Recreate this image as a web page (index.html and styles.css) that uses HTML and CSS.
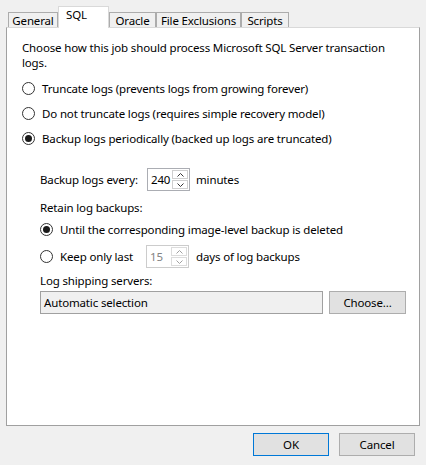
FILE: index.html
```html
<!DOCTYPE html>
<html>
<head>
<meta charset="utf-8">
<link rel="stylesheet" href="styles.css">
</head>
<body>
<div class="dialog">
  <div class="tabs">
    <div class="tab tab-general">General</div>
    <div class="tab tab-active tab-sql">SQL</div>
    <div class="tab tab-oracle">Oracle</div>
    <div class="tab tab-files">File Exclusions</div>
    <div class="tab tab-scripts">Scripts</div>
  </div>
  <div class="panel">
    <p class="desc">Choose how this job should process Microsoft SQL Server transaction<br>logs.</p>
    <div class="options">
      <div class="radio-row"><span class="radio"></span><span>Truncate logs (prevents logs from growing forever)</span></div>
      <div class="radio-row"><span class="radio"></span><span>Do not truncate logs (requires simple recovery model)</span></div>
      <div class="radio-row"><span class="radio checked"></span><span>Backup logs periodically (backed up logs are truncated)</span></div>
    </div>
    <div class="sub">
      <div class="spin-row">
        <span class="every-label">Backup logs every:</span>
        <div class="spin">
          <span class="spin-val">240</span>
          <div class="spin-btns">
            <span class="spin-btn"><svg width="7" height="4" viewBox="0 0 7 4"><path d="M0.5 3.5 L3.5 0.5 L6.5 3.5" fill="none" stroke="#333" stroke-width="1"/></svg></span>
            <span class="spin-btn"><svg width="7" height="4" viewBox="0 0 7 4"><path d="M0.5 0.5 L3.5 3.5 L6.5 0.5" fill="none" stroke="#333" stroke-width="1"/></svg></span>
          </div>
        </div>
        <span class="unit">minutes</span>
      </div>
      <div class="line retain">Retain log backups:</div>
      <div class="radio-row until"><span class="radio checked"></span><span>Until the corresponding image-level backup is deleted</span></div>
      <div class="radio-row keep">
        <span class="radio"></span>
        <span class="keep-label">Keep only last</span>
        <div class="spin spin-disabled">
          <span class="spin-val">15</span>
          <div class="spin-btns">
            <span class="spin-btn"><svg width="7" height="4" viewBox="0 0 7 4"><path d="M0.5 3.5 L3.5 0.5 L6.5 3.5" fill="none" stroke="#a0a0a0" stroke-width="1"/></svg></span>
            <span class="spin-btn"><svg width="7" height="4" viewBox="0 0 7 4"><path d="M0.5 0.5 L3.5 3.5 L6.5 0.5" fill="none" stroke="#a0a0a0" stroke-width="1"/></svg></span>
          </div>
        </div>
        <span class="unit">days of log backups</span>
      </div>
      <div class="line shipping">Log shipping servers:</div>
      <div class="field-row">
        <div class="field">Automatic selection</div>
        <button class="btn btn-choose">Choose...</button>
      </div>
    </div>
  </div>
  <div class="footer">
    <button class="btn btn-default">OK</button>
    <button class="btn">Cancel</button>
  </div>
</div>
</body>
</html>
```
FILE: styles.css
```css
* { box-sizing: border-box; }
html, body { margin: 0; padding: 0; }
body {
  background: #f0f0f0;
  font-family: "Noto Sans", "Liberation Sans", sans-serif;
  font-size: 11.5px;
  letter-spacing: -0.15px;
  color: #000;
  width: 426px;
  height: 465px;
  overflow: hidden;
}
.dialog { display: flex; flex-direction: column; }

.tabs {
  display: flex;
  align-items: flex-end;
  height: 27px;
  padding: 6px 0 0 8px;
}
.tab {
  height: 15px;
  border: 1px solid #acacac;
  border-bottom: none;
  background: #f0f0f0;
  display: flex;
  align-items: center;
  justify-content: center;
  line-height: 13px;
  white-space: nowrap;
}
.tab-general { width: 50px; }
.tab-sql { width: 51px; }
.tab-oracle { width: 47px; }
.tab-files { width: 85px; }
.tab-scripts { width: 48px; }
.tab-active {
  height: 22px;
  margin-bottom: -1px;
  background: #fff;
  border-color: #d9d9d9;
  position: relative;
  z-index: 2;
  align-items: flex-start;
  justify-content: flex-start;
  padding: 1px 0 0 7px;
}

.panel {
  margin-left: 6px;
  width: 414px;
  height: 399px;
  background: #fff;
  border: 1px solid #a0a0a0;
  border-top-color: #d9d9d9;
  padding: 12px 13px 0 15px;
}
.desc {
  margin: 0;
  line-height: 15px;
  white-space: nowrap;
}
.options {
  margin-top: 8px;
  display: flex;
  flex-direction: column;
  gap: 5px;
}
.radio-row {
  display: flex;
  align-items: center;
  height: 20px;
  white-space: nowrap;
}
.radio {
  width: 13px;
  height: 13px;
  border: 1px solid #333;
  border-radius: 50%;
  background: #fff;
  margin-right: 7px;
  display: flex;
  align-items: center;
  justify-content: center;
  flex: none;
}
.radio.checked::after {
  content: "";
  width: 7px;
  height: 7px;
  border-radius: 50%;
  background: #1a1a1a;
}

.sub {
  margin-left: 18px;
  margin-top: 20px;
}
.spin-row {
  display: flex;
  align-items: center;
  height: 23px;
}
.every-label { width: 107px; white-space: nowrap; }
.spin {
  width: 43px;
  height: 23px;
  border: 1px solid #abadb3;
  background: #fff;
  display: flex;
  align-items: center;
  padding: 1px;
}
.spin-val { flex: 1; padding-left: 2px; line-height: 15px; }
.spin-btns {
  display: flex;
  flex-direction: column;
  gap: 1px;
  align-self: stretch;
}
.spin-btn {
  width: 16px;
  flex: 1;
  border: 1px solid #cfcfcf;
  background: #fff;
  display: flex;
  align-items: center;
  justify-content: center;
}
.spin-disabled { border-color: #cccccc; }
.spin-disabled .spin-val { color: #838383; }
.spin-disabled .spin-btn { border-color: #dcdcdc; }
.unit { margin-left: 6px; white-space: nowrap; }

.line { line-height: 15px; white-space: nowrap; }
.retain { margin-top: 9px; }
.until { margin-top: 4px; }
.keep { margin-top: 6px; height: 23px; }
.keep-label { width: 86px; }
.keep .unit { margin-left: 7px; }
.shipping { margin-top: 5px; }

.field-row {
  display: flex;
  gap: 6px;
  margin-top: 3px;
}
.field {
  flex: none;
  width: 283px;
  height: 23px;
  border: 1px solid #a0a0a0;
  background: #f0f0f0;
  padding-left: 3px;
  line-height: 21px;
  white-space: nowrap;
}
.btn {
  font: inherit;
  letter-spacing: inherit;
  color: #000;
  width: 76px;
  height: 23px;
  border: 1px solid #adadad;
  background: #e1e1e1;
  padding: 0;
  line-height: 21px;
  text-align: center;
}
.btn-choose { width: 77px; flex: none; }
.btn-default { border-color: #0078d7; }

.footer {
  display: flex;
  justify-content: flex-end;
  gap: 10px;
  padding: 7px 11px 0 0;
}
```
